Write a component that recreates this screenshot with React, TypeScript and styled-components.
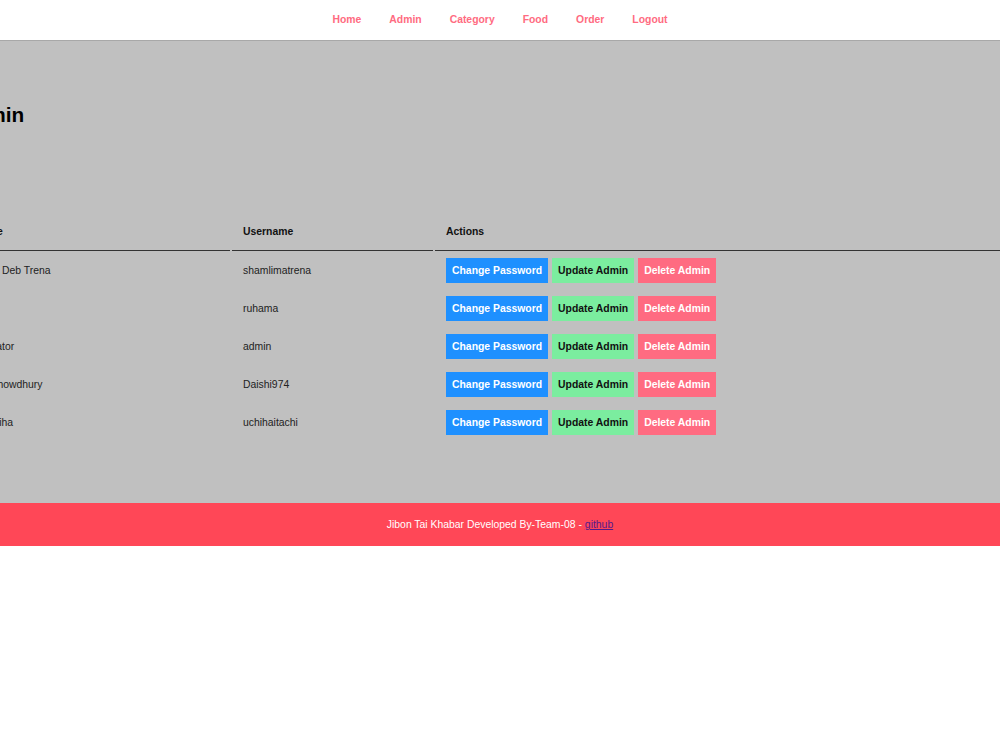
import styled, { createGlobalStyle } from "styled-components";

interface Admin {
  fullName: string;
  username: string;
}

const admins: Admin[] = [
  { fullName: "Shamlima Deb Trena", username: "shamlimatrena" },
  { fullName: "Ruhama", username: "ruhama" },
  { fullName: "Administrator", username: "admin" },
  { fullName: "Daishik Chowdhury", username: "Daishi974" },
  { fullName: "Itachi Uchiha", username: "uchihaitachi" },
];

const links = ["Home", "Admin", "Category", "Food", "Order", "Logout"];

const GlobalStyle = createGlobalStyle`
  body {
    margin: 0;
    font-family: "Liberation Sans", Arial, sans-serif;
    font-size: 10.4px;
    background: #ffffff;
  }
`;

const Menu = styled.nav`
  height: 38px;
  padding-bottom: 2px;
  border-bottom: 1px solid #a8a8a8;
  display: flex;
  justify-content: center;
  align-items: center;
  gap: 28px;
`;

const MenuLink = styled.a`
  color: #ff6b81;
  font-weight: bold;
  text-decoration: none;
`;

const MainContent = styled.main`
  background-color: #c0c0c0;
  overflow: hidden;
  padding: 62px 0 60px;
`;

const Wrapper = styled.div`
  margin-left: -60px;
  width: 1180px;
`;

const Title = styled.h1`
  margin: 0 0 85px -63px;
  font-size: 20.8px;
  color: #000;
`;

const Table = styled.table`
  width: 1180px;
  border-spacing: 2px;
  table-layout: fixed;
`;

const HeadCell = styled.th<{ $width?: number }>`
  width: ${(p) => (p.$width ? `${p.$width}px` : "auto")};
  text-align: left;
  padding: 12px 11px;
  line-height: 12px;
  border-bottom: 1px solid #333;
  color: #111;
`;

const Cell = styled.td`
  padding: 12px 11px;
  line-height: 12px;
  color: #222;
  white-space: nowrap;
`;

const ActionButton = styled.a<{ $kind: "primary" | "secondary" | "danger" }>`
  background-color: ${(p) =>
    p.$kind === "primary" ? "#1e90ff" : p.$kind === "secondary" ? "#7bed9f" : "#ff6b81"};
  color: ${(p) => (p.$kind === "secondary" ? "#111" : "#fff")};
  padding: 7px 6px;
  margin-right: 4px;
  font-weight: bold;
  text-decoration: none;
`;

const Footer = styled.footer`
  height: 43px;
  background-color: #ff4757;
  color: #fff;
  display: flex;
  justify-content: center;
  align-items: center;
`;

const FooterLink = styled.a`
  color: #551a8b;
  margin-left: 3px;
`;

export default function App() {
  return (
    <>
      <GlobalStyle />
      <Menu>
        {links.map((l) => (
          <MenuLink key={l} href="#">
            {l}
          </MenuLink>
        ))}
      </Menu>
      <MainContent>
        <Wrapper>
          <Title>Manage Admin</Title>
          <Table>
            <thead>
              <tr>
                <HeadCell $width={266}>Full Name</HeadCell>
                <HeadCell $width={179}>Username</HeadCell>
                <HeadCell>Actions</HeadCell>
              </tr>
            </thead>
            <tbody>
              {admins.map((a) => (
                <tr key={a.username}>
                  <Cell>{a.fullName}</Cell>
                  <Cell>{a.username}</Cell>
                  <Cell>
                    <ActionButton $kind="primary" href="#">Change Password</ActionButton>
                    <ActionButton $kind="secondary" href="#">Update Admin</ActionButton>
                    <ActionButton $kind="danger" href="#">Delete Admin</ActionButton>
                  </Cell>
                </tr>
              ))}
            </tbody>
          </Table>
        </Wrapper>
      </MainContent>
      <Footer>
        Jibon Tai Khabar Developed By-Team-08 -<FooterLink href="#">github</FooterLink>
      </Footer>
    </>
  );
}
